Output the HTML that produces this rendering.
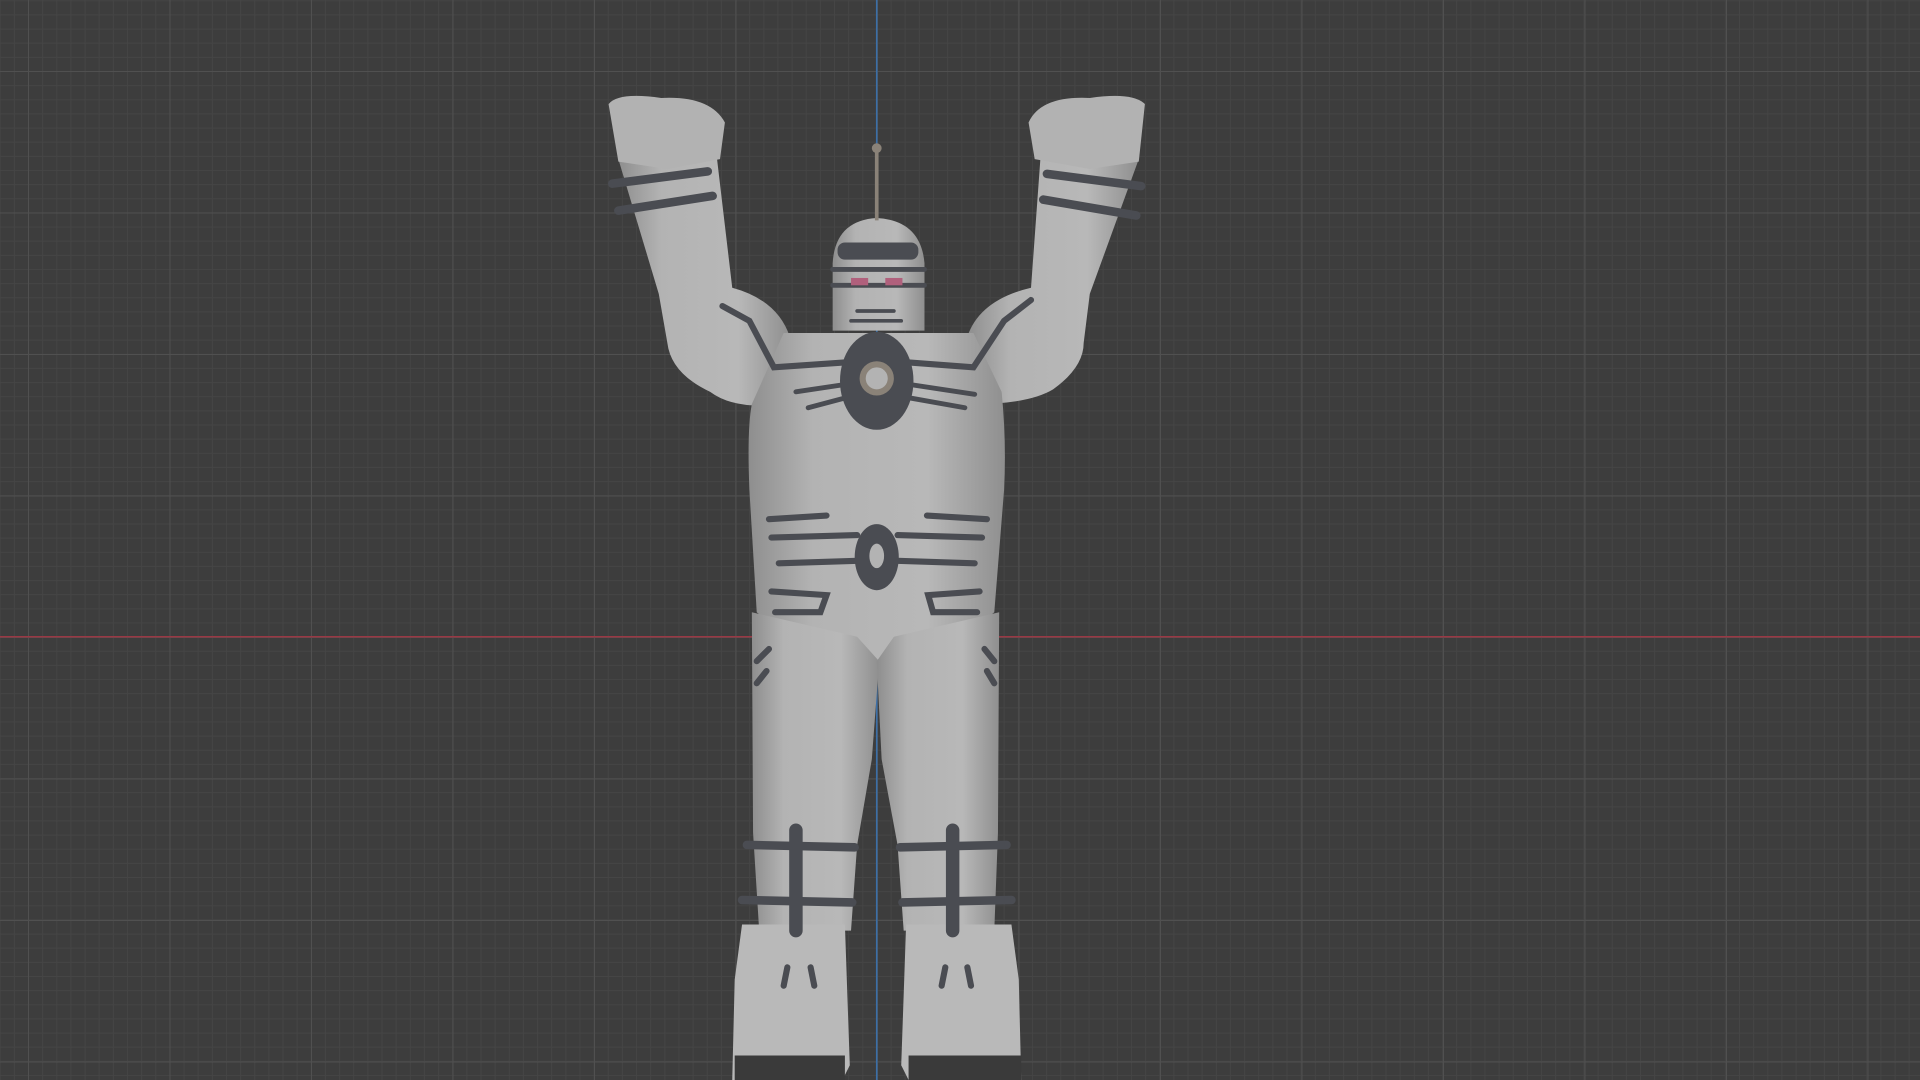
<!DOCTYPE html>
<html><head><style>
html,body{margin:0;padding:0;width:1920px;height:1080px;overflow:hidden;background:#3d3d3d}
.g{position:absolute;left:0;top:0;width:1920px;height:1080px;
background-image:
linear-gradient(to right,#505050 1px,transparent 1px),
linear-gradient(to bottom,#505050 1px,transparent 1px),
linear-gradient(to right,#454545 1px,transparent 1px),
linear-gradient(to bottom,#454545 1px,transparent 1px);
background-size:141.5px 141.5px,141.5px 141.5px,14.15px 14.15px,14.15px 14.15px;
background-position:28px 71px,28px 71px,28px 71px,28px 71px}
svg{position:absolute;left:0;top:0}
</style></head><body>
<div class="g"></div>
<svg width="1920" height="1080" viewBox="0 0 1568 882">
<defs>
<linearGradient id="b" x1="0" x2="1"><stop offset="0" stop-color="#8e8e8e"/><stop offset=".25" stop-color="#b3b3b3"/><stop offset=".7" stop-color="#b8b8b8"/><stop offset="1" stop-color="#8f8f8f"/></linearGradient>
</defs>
<line x1="0" y1="520" x2="1568" y2="520" stroke="#9a3844" stroke-width="1.3"/>
<line x1="716" y1="0" x2="716" y2="882" stroke="#3b6fa8" stroke-width="1.3"/>
<g fill="url(#b)">
<!-- arms -->
<path d="M505 130 L585 125 L598 235 Q635 245 645 275 L640 330 Q600 335 580 320 Q548 305 545 280 L538 240 Z"/>
<path d="M930 130 L850 125 L842 235 Q800 245 790 275 L795 330 Q840 330 860 318 Q885 300 885 280 L890 240 Z"/>
<!-- fists -->
<path d="M497 85 Q505 75 540 80 Q580 78 592 100 L588 130 L545 138 L505 132 Z" fill="#b2b2b2"/>
<path d="M935 85 Q925 75 890 80 Q850 78 840 100 L845 130 L890 138 L930 132 Z" fill="#b2b2b2"/>
<!-- head -->
<path d="M680 270 L680 215 Q682 180 716 178 Q752 180 755 215 L755 270 Z"/>
<!-- torso -->
<path d="M640 272 L795 272 L818 320 Q822 360 820 400 L812 500 Q770 535 720 545 L710 545 Q660 535 618 500 L612 400 Q610 350 614 330 Z"/>
<!-- legs -->
<path d="M614 500 L700 520 L718 540 L712 620 L700 690 L695 760 L620 760 L615 680 Z"/>
<path d="M816 500 L730 520 L716 540 L720 620 L733 690 L738 760 L812 760 L815 680 Z"/>
</g>
<!-- boots -->
<path d="M606 755 L690 755 L694 870 L688 882 L598 882 L600 800 Z" fill="#b9b9b9"/>
<path d="M740 755 L826 755 L832 800 L834 882 L742 882 L736 870 Z" fill="#b9b9b9"/>
<rect x="600" y="862" width="90" height="20" fill="#3a3a3a"/>
<rect x="742" y="862" width="92" height="20" fill="#3a3a3a"/>
<!-- antenna -->
<line x1="716" y1="122" x2="716" y2="180" stroke="#8a8278" stroke-width="3"/>
<circle cx="716" cy="121" r="4" fill="#8a8278"/>
<g fill="none" stroke="#4a4c52" stroke-linecap="round">
<path d="M500 150 L578 140 M505 172 L582 160" stroke-width="7"/>
<path d="M855 142 L932 152 M852 163 L928 176" stroke-width="7"/>
<path d="M680 220 L755 220 M680 233 L755 233" stroke-width="4"/>
<path d="M700 254 L730 254 M695 262 L736 262" stroke-width="3"/>
<path d="M590 250 L612 262 L632 300 L690 296 M842 245 L820 262 L795 300 L742 296" stroke-width="5"/>
<path d="M650 320 L690 314 M743 314 L796 322 M660 333 L690 325 M743 325 L788 333" stroke-width="4"/>
<path d="M628 424 L675 421 M757 421 L806 424 M630 439 L700 437 M733 437 L802 439 M636 460 L700 458 M733 458 L796 460" stroke-width="5"/>
<path d="M630 483 L675 486 L670 500 L633 500 M800 483 L758 486 L762 500 L798 500" stroke-width="5"/>
<path d="M628 530 L618 540 M626 548 L618 558 M804 530 L812 540 M806 548 L812 558" stroke-width="5"/>
<path d="M610 690 L698 692 M606 735 L696 737 M735 692 L822 690 M737 737 L826 735" stroke-width="7"/>
<path d="M650 678 L650 760 M778 678 L778 760" stroke-width="11"/>
<path d="M643 790 L640 805 M662 790 L665 805 M772 790 L769 805 M790 790 L793 805" stroke-width="5"/>
</g>
<ellipse cx="716" cy="311" rx="30" ry="40" fill="#4a4c52"/>
<circle cx="716" cy="309" r="14" fill="#8a8278"/>
<circle cx="716" cy="309" r="9" fill="#b3b3b3"/>
<ellipse cx="716" cy="455" rx="18" ry="27" fill="#4a4c52"/>
<ellipse cx="716" cy="454" rx="6" ry="10" fill="#b3b3b3"/>
<rect x="684" y="198" width="66" height="14" rx="6" fill="#4a4c52"/>
<rect x="695" y="227" width="14" height="6" fill="#b0607c"/>
<rect x="723" y="227" width="14" height="6" fill="#b0607c"/>
</svg>
</body></html>
